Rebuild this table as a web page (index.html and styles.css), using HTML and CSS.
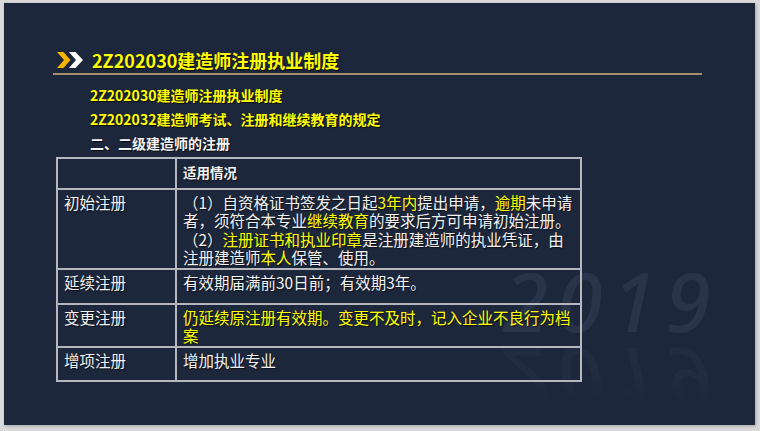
FILE: index.html
```html
<!DOCTYPE html>
<html lang="zh-CN">
<head>
<meta charset="utf-8">
<title>2Z202030建造师注册执业制度</title>
<link rel="stylesheet" href="styles.css">
</head>
<body>
<div class="slide">
  <div class="watermark" aria-hidden="true">2019</div>
  <div class="watermark reflect" aria-hidden="true">2019</div>
  <div class="content">
    <div class="title-row">
      <svg class="chevrons" width="27" height="16" viewBox="0 0 27 16">
        <polygon points="0,0 6.5,0 13.5,8 6.5,16 0,16 7,8" fill="#f6b400"/>
        <polygon points="12,0 18.5,0 26,8 18.5,16 12,16 19,8" fill="#ffffff"/>
      </svg>
      <h1 class="title">2Z202030建造师注册执业制度</h1>
    </div>
    <div class="rule"></div>
    <div class="subs">
      <p class="sub yellow">2Z202030建造师注册执业制度</p>
      <p class="sub yellow">2Z202032建造师考试、注册和继续教育的规定</p>
      <p class="sub white">二、二级建造师的注册</p>
    </div>
    <table class="reg-table">
      <tr class="row-head">
        <td class="c1"></td>
        <td class="c2 head">适用情况</td>
      </tr>
      <tr class="row-1">
        <td class="c1">初始注册</td>
        <td class="c2">（1）自资格证书签发之日起<span class="hl">3年内</span>提出申请，<span class="hl">逾期</span>未申请<br>者，须符合本专业<span class="hl">继续教育</span>的要求后方可申请初始注册。<br>（2）<span class="hl">注册证书和执业印章</span>是注册建造师的执业凭证，由<br>注册建造师<span class="hl">本人</span>保管、使用。</td>
      </tr>
      <tr class="row-2">
        <td class="c1">延续注册</td>
        <td class="c2">有效期届满前30日前；有效期3年。</td>
      </tr>
      <tr class="row-3">
        <td class="c1">变更注册</td>
        <td class="c2 hl">仍延续原注册有效期。变更不及时，记入企业不良行为档<br>案</td>
      </tr>
      <tr class="row-4">
        <td class="c1">增项注册</td>
        <td class="c2">增加执业专业</td>
      </tr>
    </table>
  </div>
</div>
</body>
</html>
```
FILE: styles.css
```css
* { box-sizing: border-box; }
html, body { margin: 0; padding: 0; }
body {
  width: 760px;
  height: 431px;
  overflow: hidden;
  background: #d9d9d9;
  font-family: "Noto Sans CJK SC", "Noto Sans", sans-serif;
}
.slide {
  position: relative;
  margin: 3px 0 0 4px;
  width: 751px;
  height: 422px;
  background: #1d273b;
  box-shadow: 1px 1px 3px rgba(0,0,0,0.25);
  overflow: hidden;
}
.content {
  position: relative;
  z-index: 1;
  padding-top: 45px;
}
.watermark {
  position: absolute;
  z-index: 0;
  left: 499px;
  top: 256px;
  font-family: "Noto Sans", "Open Sans", sans-serif;
  font-style: italic;
  font-weight: 500;
  font-size: 82px;
  line-height: 82px;
  letter-spacing: 9px;
  color: #29334a;
}
.watermark.reflect {
  top: 336px;
  transform: scaleY(-1);
  color: #222c41;
  -webkit-mask-image: linear-gradient(to top, rgba(0,0,0,1) 45%, rgba(0,0,0,0) 80%);
  mask-image: linear-gradient(to top, rgba(0,0,0,1) 45%, rgba(0,0,0,0) 80%);
}
.title-row {
  display: flex;
  align-items: center;
  padding-left: 53px;
  height: 24px;
}
.chevrons { display: block; flex: none; }
.title {
  margin: 0 0 0 8px;
  font-size: 18px;
  line-height: 24px;
  font-weight: 700;
  color: #ffff00;
  text-shadow: 1px 1px 1px rgba(0,0,0,0.7);
}
.rule {
  margin: 1px 0 0 49px;
  width: 649px;
  height: 2px;
  background: #a48f6c;
}
.subs {
  margin-top: 8px;
  padding-left: 86px;
}
.sub {
  margin: 0;
  font-size: 14px;
  line-height: 24px;
  font-weight: 700;
  text-shadow: 1px 1px 1px rgba(0,0,0,0.7);
}
.yellow { color: #ffff00; }
.white { color: #f4f4f4; }
.reg-table {
  margin: 2px 0 0 52px;
  width: 526px;
  border-collapse: collapse;
  color: #f2f2f2;
  font-size: 15.5px;
  line-height: 18.4px;
  text-shadow: 1px 1px 1px rgba(0,0,0,0.6);
}
.reg-table td {
  border: 2px solid #b4b7be;
  vertical-align: top;
  padding: 3px 0 0 6px;
  white-space: nowrap;
}
.reg-table .c1 { width: 119px; }
.reg-table .head {
  font-size: 13.5px;
  font-weight: 700;
  padding-top: 4px;
}
.row-head { height: 31px; }
.row-1 { height: 80px; }
.row-2 { height: 35px; }
.row-3 { height: 43px; }
.row-4 { height: 34px; }
.hl { color: #ffff00; }
```
